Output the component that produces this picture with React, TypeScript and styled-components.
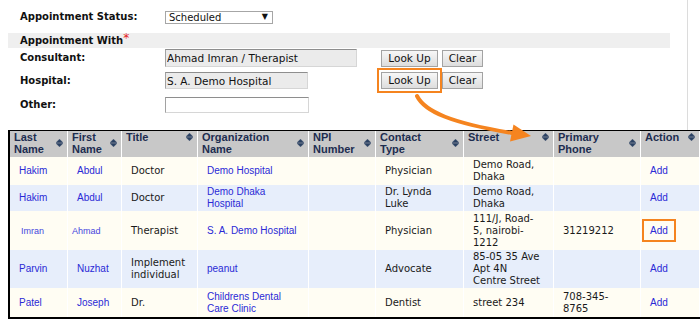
import React from 'react';
import styled, { createGlobalStyle, css } from 'styled-components';

const GlobalStyle = createGlobalStyle`
  html, body {
    margin: 0;
    padding: 0;
    background: #fff;
  }
  body {
    font-family: "DejaVu Sans", Verdana, sans-serif;
  }
`;

const ORANGE = '#f5841f';

type Cell = { text: string[]; link?: boolean; small?: boolean; mark?: boolean; shift?: number };

const T = (...text: string[]): Cell => ({ text });
const L = (...text: string[]): Cell => ({ text, link: true });

const columns = [
  { w: 58, label: ['Last', 'Name'] },
  { w: 54, label: ['First', 'Name'] },
  { w: 76, label: ['Title'] },
  { w: 111, label: ['Organization', 'Name'] },
  { w: 67, label: ['NPI', 'Number'] },
  { w: 88, label: ['Contact', 'Type'] },
  { w: 90, label: ['Street'] },
  { w: 87, label: ['Primary', 'Phone'] },
  { w: 59, label: ['Action'] },
];

const rows: { h: number; cells: Cell[] }[] = [
  {
    h: 28,
    cells: [L('Hakim'), L('Abdul'), T('Doctor'), L('Demo Hospital'), T(), T('Physician'), T('Demo Road,', 'Dhaka'), T(), L('Add')],
  },
  {
    h: 26,
    cells: [L('Hakim'), L('Abdul'), T('Doctor'), L('Demo Dhaka', 'Hospital'), T(), T('Dr. Lynda', 'Luke'), T('Demo Road,', 'Dhaka'), T(), L('Add')],
  },
  {
    h: 39,
    cells: [
      { text: ['Imran'], link: true, small: true, shift: 2 },
      { text: ['Ahmad'], link: true, small: true, shift: -5 },
      T('Therapist'),
      L('S. A. Demo Hospital'),
      T(),
      T('Physician'),
      T('111/J, Road-', '5, nairobi-', '1212'),
      T('31219212'),
      { text: ['Add'], link: true, mark: true },
    ],
  },
  {
    h: 38,
    cells: [L('Parvin'), L('Nuzhat'), T('Implement', 'individual'), L('peanut'), T(), T('Advocate'), T('85-05 35 Ave', 'Apt 4N', 'Centre Street'), T(), L('Add')],
  },
  {
    h: 29,
    cells: [L('Patel'), L('Joseph'), T('Dr.'), L('Childrens Dental', 'Care Clinic'), T(), T('Dentist'), T('street 234'), T('708-345-', '8765'), L('Add')],
  },
];

const Page = styled.div`
  position: relative;
  width: 700px;
  height: 319px;
  overflow: hidden;
  background: #fff;
`;

const FormArea = styled.div`
  box-sizing: border-box;
  margin-left: 8px;
  width: 680px;
  height: 130px;
  padding-top: 7px;
  border-right: 1px solid #dcdcdc;
`;

const FieldRow = styled.div<{ $h: number; $top: number }>`
  display: grid;
  grid-template-columns: 145px 216px auto;
  align-items: center;
  height: ${p => p.$h}px;
  margin-top: ${p => p.$top}px;
  padding-left: 12px;
`;

const Label = styled.div`
  font: bold 10px/12px "DejaVu Sans", Verdana, sans-serif;
  color: #111;
`;

const Band = styled.div`
  box-sizing: border-box;
  margin-top: 6px;
  width: 662px;
  height: 15px;
  padding-left: 12px;
  background: #efefef;
  font: bold 10px/15px "DejaVu Sans", Verdana, sans-serif;
  color: #111;
`;

const Required = styled.span`
  color: #e41b1b;
  font-weight: normal;
  font-size: 12px;
  line-height: 10px;
  vertical-align: top;
`;

const SelectBox = styled.div`
  box-sizing: border-box;
  width: 108px;
  height: 13px;
  padding: 0 4px 0 3px;
  display: flex;
  align-items: center;
  justify-content: space-between;
  border: 1px solid #a6a6a6;
  background: #fff;
  font: 10px/11px "DejaVu Sans", Verdana, sans-serif;
  color: #111;
`;

const Caret = styled.span`
  font-size: 8px;
  line-height: 8px;
  color: #111;
`;

const TextBox = styled.input<{ $w: number; $h: number; $filled?: boolean }>`
  box-sizing: border-box;
  width: ${p => p.$w}px;
  height: ${p => p.$h}px;
  margin: 0;
  padding: 0 1px;
  border: 1px solid #d6d6d6;
  border-top-color: #8e8e8e;
  border-left-color: #a2a2a2;
  border-radius: 0;
  background: ${p => (p.$filled ? '#ebebeb' : '#fff')};
  font: 10.5px "DejaVu Sans", Verdana, sans-serif;
  color: #111;
  outline: none;
`;

const ButtonGroup = styled.div`
  display: flex;
  align-items: center;
  gap: 4px;
`;

const Button = styled.button<{ $w: number; $marked?: boolean }>`
  box-sizing: border-box;
  width: ${p => p.$w}px;
  height: 17px;
  margin: 0;
  padding: 0;
  border: 1px solid #a3a3a3;
  border-radius: 0;
  background: linear-gradient(#f7f7f7, #dddddd);
  font: 10.5px/15px "DejaVu Sans", Verdana, sans-serif;
  color: #111;
  ${p =>
    p.$marked &&
    css`
      outline: 2px solid ${ORANGE};
      outline-offset: 2px;
    `}
`;

const TableFrame = styled.div`
  margin-left: 8px;
  width: 692px;
  border-top: 1px solid #000;
  border-left: 2px solid #000;
  border-bottom: 2px solid #000;
`;

const Grid = styled.table`
  width: 690px;
  table-layout: fixed;
  border-collapse: separate;
  border-spacing: 0;
`;

const Th = styled.th`
  box-sizing: border-box;
  height: 26px;
  padding: 0 4px;
  vertical-align: top;
  text-align: left;
  background: #c8c8c8;
  border-right: 1px solid #fff;
  font: bold 11px/12px "Liberation Sans", Arial, sans-serif;
  color: #1d2d50;
`;

const HeadInner = styled.div`
  display: flex;
  align-items: center;
  justify-content: space-between;
  gap: 2px;
`;

const SortSvg = styled.svg`
  flex: none;
  display: block;
`;

const Tr = styled.tr<{ $h: number; $alt: boolean }>`
  height: ${p => p.$h}px;
  background: ${p => (p.$alt ? '#e7eefb' : '#fffdf3')};
`;

const Td = styled.td`
  padding: 0 4px 0 9px;
  vertical-align: middle;
  border-right: 1px solid #fff;
  white-space: nowrap;
  overflow: hidden;
  font: 10px/12px "DejaVu Sans", Verdana, sans-serif;
  color: #1a1a1a;
`;

const Link = styled.a<{ $small?: boolean; $marked?: boolean; $shift?: number }>`
  position: relative;
  left: ${p => p.$shift ?? 0}px;
  font: ${p => (p.$small ? '9px' : '10px')}/12px "Liberation Sans", Arial, sans-serif;
  color: ${p => (p.$small ? '#4646de' : '#2a2ad6')};
  text-decoration: none;
  ${p =>
    p.$marked &&
    css`
      padding: 0 2px;
      margin: 0 -2px;
      outline: 2px solid ${ORANGE};
      outline-offset: 4px;
    `}
`;

const Overlay = styled.svg`
  position: absolute;
  left: 0;
  top: 0;
  pointer-events: none;
`;

function SortIcon() {
  return (
    <SortSvg width="7" height="8" viewBox="0 0 7 8">
      <path d="M3.5 0.3 L6.7 3.4 H0.3 Z M0.3 4.6 H6.7 L3.5 7.7 Z" fill="#2b4263" stroke="#2b4263" strokeWidth="0.6" strokeLinejoin="round" />
    </SortSvg>
  );
}

function Lines({ text }: { text: string[] }) {
  return (
    <>
      {text.map((t, i) => (
        <React.Fragment key={i}>
          {i > 0 && <br />}
          {t}
        </React.Fragment>
      ))}
    </>
  );
}

export default function App() {
  return (
    <Page>
      <GlobalStyle />
      <FormArea>
        <FieldRow $h={20} $top={0}>
          <Label>Appointment Status:</Label>
          <SelectBox>
            <span>Scheduled</span>
            <Caret>▼</Caret>
          </SelectBox>
        </FieldRow>
        <Band>
          Appointment With<Required>*</Required>
        </Band>
        <FieldRow $h={18} $top={1}>
          <Label>Consultant:</Label>
          <TextBox $w={192} $h={18} $filled readOnly value="Ahmad Imran / Therapist" />
          <ButtonGroup>
            <Button $w={57}>Look Up</Button>
            <Button $w={41}>Clear</Button>
          </ButtonGroup>
        </FieldRow>
        <FieldRow $h={17} $top={5}>
          <Label>Hospital:</Label>
          <TextBox $w={143} $h={17} $filled readOnly value="S. A. Demo Hospital" />
          <ButtonGroup>
            <Button $w={57} $marked>Look Up</Button>
            <Button $w={41}>Clear</Button>
          </ButtonGroup>
        </FieldRow>
        <FieldRow $h={16} $top={8}>
          <Label>Other:</Label>
          <TextBox $w={144} $h={16} readOnly value="" />
        </FieldRow>
      </FormArea>

      <TableFrame>
        <Grid>
          <colgroup>
            {columns.map((c, i) => (
              <col key={i} style={{ width: c.w }} />
            ))}
          </colgroup>
          <thead>
            <tr>
              {columns.map((c, i) => (
                <Th key={i}>
                  <HeadInner>
                    <span>
                      <Lines text={c.label} />
                    </span>
                    <SortIcon />
                  </HeadInner>
                </Th>
              ))}
            </tr>
          </thead>
          <tbody>
            {rows.map((r, ri) => (
              <Tr key={ri} $h={r.h} $alt={ri % 2 === 1}>
                {r.cells.map((c, ci) => (
                  <Td key={ci}>
                    {c.link ? (
                      <Link href="#" $small={c.small} $marked={c.mark} $shift={c.shift}>
                        <Lines text={c.text} />
                      </Link>
                    ) : (
                      <Lines text={c.text} />
                    )}
                  </Td>
                ))}
              </Tr>
            ))}
          </tbody>
        </Grid>
      </TableFrame>

      <Overlay width="700" height="319" viewBox="0 0 700 319">
        <path d="M417 96 C425 112 452 123 512 133" fill="none" stroke={ORANGE} strokeWidth="4" strokeLinecap="round" />
        <path d="M531 136 L513.5 124.5 L510 141.5 Z" fill={ORANGE} />
      </Overlay>
    </Page>
  );
}
